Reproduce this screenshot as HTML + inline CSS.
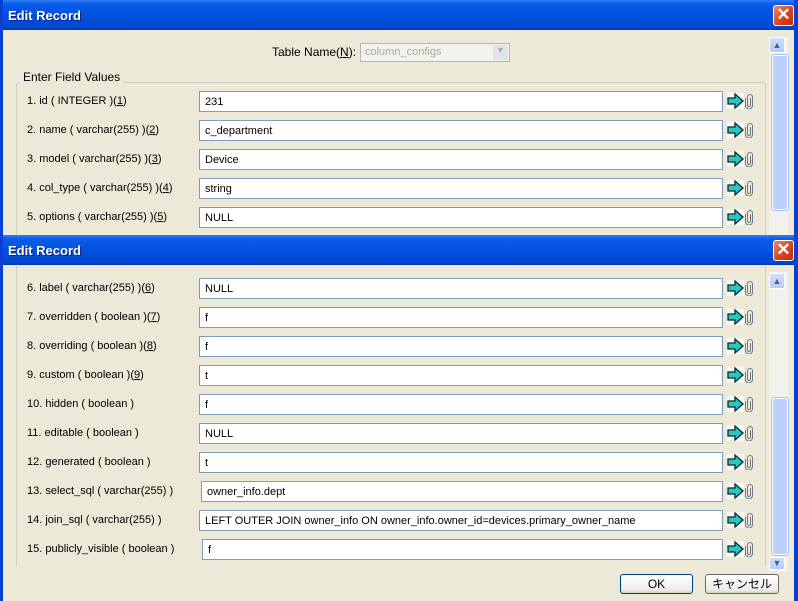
<!DOCTYPE html>
<html><head><meta charset="utf-8"><style>
*{margin:0;padding:0;box-sizing:border-box}
body{width:798px;height:601px;overflow:hidden;background:#ece9d8;position:relative;font-family:Tahoma,"Liberation Sans","Noto Sans CJK JP",sans-serif;font-size:11px;color:#000}
.win{position:absolute;left:0;width:798px;background:#ece9d8;border-left:3px solid #0a3fd6;border-right:4px solid #0a3fd6}
.title{position:absolute;left:0;right:0;height:30px;background:linear-gradient(#2f7dfa 0,#0a5ce8 4px,#0052e0 50%,#0048d0 90%,#0038b8 100%);color:#fff;font-weight:bold;font-size:13px;padding:8px 0 0 5px;text-shadow:1px 1px #0a1f7a}
.close{position:absolute;width:21px;height:21px;border:1px solid #fff;border-radius:3px;background:linear-gradient(135deg,#e98a6a,#d6401a 60%,#c0300c);color:#fff;font-size:17px;line-height:18px;text-align:center;font-weight:bold}
.lbl{position:absolute;left:27px}
.in{position:absolute;height:21px;background:#fff;border:1px solid #7f9db9;padding:4px 5px 0;width:524px}
.arr{position:absolute;left:727px;width:17px;height:16px}
.clip{position:absolute;left:745px;width:8px;height:15px}
.sb{position:absolute;left:766px;width:19px;background:#f3f2ea}
.btn{position:absolute;width:16px;height:16px;border:1px solid #fff;border-radius:2px;background:linear-gradient(#cfdcfd,#b8ccf8);}
.thumb{position:absolute;left:769px;width:16px;border:1px solid #fff;border-radius:2px;background:#bccefb;outline:1px solid #a9bdf0}
.pb{position:absolute;height:20px;border:1px solid #003c74;border-radius:3px;background:linear-gradient(#fff,#ecebe6 85%,#d6d0c5);text-align:center;line-height:18px;font-size:12px}
u{text-decoration:underline}
</style></head><body>

<div class="win" style="top:0;height:236px">
 <div class="title" style="top:0">Edit Record</div>
 <div class="close" style="left:770px;top:5px">✕</div>
 <div style="position:absolute;left:269px;top:45px;font-size:12px">Table Name(<u>N</u>):</div>
 <div style="position:absolute;left:357px;top:43px;width:150px;height:19px;border:1px solid #a7b8ce;background:#f3f3ee;color:#aca899;padding:2px 4px">column_configs<span style="position:absolute;right:1px;top:1px;width:15px;height:15px;background:#dfe3ea;color:#aaa;font-size:9px;text-align:center">▼</span></div>
 <div style="position:absolute;left:13px;top:82px;width:750px;height:170px;border:1px solid #d0d0bf;border-radius:3px"></div>
 <div style="position:absolute;left:17px;top:70px;background:#ece9d8;padding:0 3px;font-size:12px">Enter Field Values</div>
 <div class="sb" style="top:37px;height:199px"></div>
 <div class="btn" style="left:766px;top:37px;color:#4d6185;font-size:9px;text-align:center;line-height:14px">▲</div>
 <div class="thumb" style="top:55px;height:155px"></div>
</div>

<div class="win" style="top:235px;height:366px">
 <div class="title" style="top:0">Edit Record</div>
 <div class="close" style="left:770px;top:5px">✕</div>
 <div style="position:absolute;left:13px;top:30px;width:750px;height:302px;border-left:1px solid #d0d0bf;border-right:1px solid #d0d0bf"></div>
 <div class="sb" style="top:37px;height:300px"></div>
 <div class="btn" style="left:766px;top:38px;color:#4d6185;font-size:9px;text-align:center;line-height:14px">▲</div>
 <div class="thumb" style="top:163px;height:157px"></div>
 <div class="btn" style="left:766px;top:322px;height:13px;color:#4d6185;font-size:9px;text-align:center;line-height:11px">▼</div>
 <div class="pb" style="left:617px;top:339px;width:73px">OK</div>
 <div class="pb" style="left:702px;top:339px;width:74px;border-color:#6b6b6b">キャンセル</div>
</div>

<div id="rows"></div>
<script>
var rows=[
[101,"1. id ( INTEGER )(<u>1</u>)","231",199],
[130,"2. name ( varchar(255) )(<u>2</u>)","c_department",199],
[159,"3. model ( varchar(255) )(<u>3</u>)","Device",199],
[188,"4. col_type ( varchar(255) )(<u>4</u>)","string",199],
[217,"5. options ( varchar(255) )(<u>5</u>)","NULL",199],
[288,"6. label ( varchar(255) )(<u>6</u>)","NULL",199],
[317,"7. overridden ( boolean )(<u>7</u>)","f",199],
[346,"8. overriding ( boolean )(<u>8</u>)","f",199],
[375,"9. custom ( boolean )(<u>9</u>)","t",199],
[404,"10. hidden ( boolean )","f",199],
[433,"11. editable ( boolean )","NULL",199],
[462,"12. generated ( boolean )","t",199],
[491,"13. select_sql ( varchar(255) )","owner_info.dept",201],
[520,"14. join_sql ( varchar(255) )","LEFT OUTER JOIN owner_info ON owner_info.owner_id=devices.primary_owner_name",199],
[549,"15. publicly_visible ( boolean )","f",202]];
var h="";
rows.forEach(function(r){var y=r[0];
h+='<div class="lbl" style="top:'+(y-6)+'px">'+r[1]+'</div>';
h+='<div class="in" style="left:'+r[3]+'px;top:'+(y-10)+'px;width:'+(723-r[3])+'px">'+r[2]+'</div>';
h+='<svg class="arr" style="top:'+(y-8)+'px" viewBox="0 0 17 16"><rect width="17" height="16" fill="#f4f8f4"/><path d="M1 5h7V1l8 7-8 7v-4H1z" fill="#2cc6c0" stroke="#0a2a30" stroke-width="1.3"/></svg>';
h+='<svg class="clip" style="top:'+(y-7)+'px" viewBox="0 0 8 15"><path d="M5.5 4v7a1.5 1.5 0 0 1-3 0V3a2.5 2.5 0 0 1 5 0v8.5a3.5 3.5 0 0 1-7 0V4" fill="none" stroke="#6e7a88" stroke-width="1"/></svg>';
});
document.getElementById("rows").innerHTML=h;
</script>
</body></html>
